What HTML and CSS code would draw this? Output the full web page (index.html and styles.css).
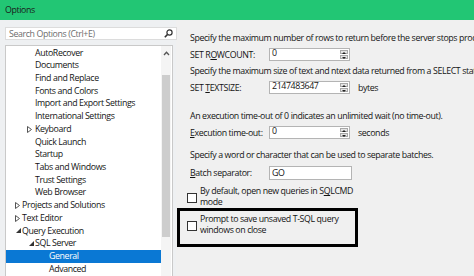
FILE: index.html
```html
<!DOCTYPE html>
<html lang="en">
  <head>
    <meta charset="UTF-8" />
    <title>Options</title>
    <link rel="stylesheet" href="styles.css">
  </head>
  <body>
    <div class="window">
      <header class="titlebar">Options</header>
      <div class="main">
        <aside class="side">
          <div class="search">
            <span class="search-hint">Search Options (Ctrl+E)</span>
            <svg class="search-icon" width="9" height="9" viewBox="0 0 9 9">
              <circle cx="5.5" cy="3.5" r="2.6" fill="none" stroke="#333" stroke-width="1.2" />
              <path d="M3.6 5.4 L0.8 8.2" stroke="#333" stroke-width="1.6" />
            </svg>
          </div>
          <div class="tree">
            <ul class="nodes">
              <li class="node lvl2"><span class="twisty"></span>AutoRecover</li>
              <li class="node lvl2"><span class="twisty"></span>Documents</li>
              <li class="node lvl2"><span class="twisty"></span>Find and Replace</li>
              <li class="node lvl2"><span class="twisty"></span>Fonts and Colors</li>
              <li class="node lvl2"><span class="twisty"></span>Import and Export Settings</li>
              <li class="node lvl2"><span class="twisty"></span>International Settings</li>
              <li class="node lvl2 closed"><span class="twisty"><svg width="5" height="7" viewBox="0 0 5 7"><path d="M0.5 0.5 L4.5 3.5 L0.5 6.5 Z" fill="#fff" stroke="#555" /></svg></span>Keyboard</li>
              <li class="node lvl2"><span class="twisty"></span>Quick Launch</li>
              <li class="node lvl2"><span class="twisty"></span>Startup</li>
              <li class="node lvl2"><span class="twisty"></span>Tabs and Windows</li>
              <li class="node lvl2"><span class="twisty"></span>Trust Settings</li>
              <li class="node lvl2"><span class="twisty"></span>Web Browser</li>
              <li class="node lvl1 closed"><span class="twisty"><svg width="5" height="7" viewBox="0 0 5 7"><path d="M0.5 0.5 L4.5 3.5 L0.5 6.5 Z" fill="#fff" stroke="#555" /></svg></span>Projects and Solutions</li>
              <li class="node lvl1 closed"><span class="twisty"><svg width="5" height="7" viewBox="0 0 5 7"><path d="M0.5 0.5 L4.5 3.5 L0.5 6.5 Z" fill="#fff" stroke="#555" /></svg></span>Text Editor</li>
              <li class="node lvl1 open"><span class="twisty"><svg width="5" height="5" viewBox="0 0 5 5"><path d="M5 0 L5 5 L0 5 Z" fill="#333" /></svg></span>Query Execution</li>
              <li class="node lvl2 open"><span class="twisty"><svg width="5" height="5" viewBox="0 0 5 5"><path d="M5 0 L5 5 L0 5 Z" fill="#333" /></svg></span>SQL Server</li>
              <li class="node lvl3 selected"><span class="twisty"></span>General</li>
              <li class="node lvl3"><span class="twisty"></span>Advanced</li>
            </ul>
            <div class="scrollbar">
              <svg class="scroll-up" width="7" height="5" viewBox="0 0 7 5">
                <path d="M1 4 L3.5 1.3 L6 4" fill="none" stroke="#555" stroke-width="1.3" />
              </svg>
              <div class="thumb"></div>
            </div>
          </div>
        </aside>

        <section class="panel">
          <p class="desc">Specify the maximum number of rows to return before the server stops processing your query.</p>
          <div class="field">
            <label class="label">SET R<u>O</u>WCOUNT:</label>
            <div class="input top"><span class="value">0</span><span class="spin"><i class="up"></i><i class="down"></i></span></div>
          </div>

          <p class="desc gap-s">Specify the maximum size of text and ntext data returned from a SELECT statement.</p>
          <div class="field">
            <label class="label">SET <u>T</u>EXTSIZE:</label>
            <div class="input top"><span class="value">2147483647</span><span class="spin"><i class="up"></i><i class="down"></i></span></div>
            <span class="unit">bytes</span>
          </div>

          <p class="desc gap-l">An execution time-out of 0 indicates an unlimited wait (no time-out).</p>
          <div class="field">
            <label class="label"><u>E</u>xecution time-out:</label>
            <div class="input top"><span class="value">0</span><span class="spin"><i class="up"></i><i class="down"></i></span></div>
            <span class="unit">seconds</span>
          </div>

          <p class="desc gap-m">Specify a word or character that can be used to separate batches.</p>
          <div class="field tall">
            <label class="label"><u>B</u>atch separator:</label>
            <div class="input wide"><span class="value">GO</span></div>
          </div>

          <div class="check first">
            <span class="box"></span>
            <span class="check-text">By default, open new queries in S<u>Q</u>LCMD<br>mode</span>
          </div>

          <div class="marked">
            <div class="check">
              <span class="box"></span>
              <span class="check-text">Prompt to save unsaved T-SQL query<br>windows on close</span>
            </div>
          </div>
        </section>
      </div>
    </div>
  </body>
</html>
```

FILE: styles.css
```css
* {
  margin: 0;
  padding: 0;
  box-sizing: border-box;
}

body {
  width: 474px;
  height: 276px;
  overflow: hidden;
  background: #f0f0f0;
  font-family: "Open Sans", "Noto Sans", sans-serif;
  font-size: 8.8px;
  letter-spacing: -0.38px;
  color: #141414;
}

.window {
  height: 276px;
  display: flex;
  flex-direction: column;
}

.titlebar {
  height: 20px;
  line-height: 20px;
  padding-left: 5px;
  background: #22c674;
  color: #1a1a1a;
}

.main {
  flex: 1;
  display: flex;
  min-height: 0;
}

/* left column */

.side {
  width: 176px;
  padding: 7px 0 0 5px;
  background: #eef0f2;
  display: flex;
  flex-direction: column;
  gap: 5px;
}

.search {
  height: 13px;
  margin-right: -1px;
  background: #fff;
  border: 1px solid #dcdcdc;
  display: flex;
  align-items: center;
  justify-content: space-between;
  padding: 0 3px 0 3px;
}

.search-hint {
  color: #6d6d6d;
}

.tree {
  flex: 1;
  width: 168px;
  background: #fff;
  border: 1px solid #c9c9c9;
  border-bottom: none;
  display: flex;
  overflow: hidden;
}

.nodes {
  list-style: none;
  flex: 1;
  padding-top: 0.5px;
}

.node {
  height: 12.73px;
  line-height: 12.73px;
  display: flex;
  align-items: center;
  white-space: nowrap;
}

.twisty {
  width: 10px;
  height: 100%;
  display: flex;
  align-items: center;
  justify-content: center;
}

.node.open .twisty {
  justify-content: flex-end;
  padding-right: 1px;
}

.node.lvl2.closed .twisty {
  justify-content: flex-start;
  padding-left: 2px;
}

.lvl1 {
  padding-left: 6px;
}

.lvl2 {
  padding-left: 19px;
}

.lvl3 {
  padding-left: 33px;
}

.selected {
  background: #0a78d4;
  color: #fff;
}

.scrollbar {
  width: 10px;
  margin-right: 1px;
  background: #f4f4f4;
  display: flex;
  flex-direction: column;
  align-items: center;
}

.scroll-up {
  margin-top: 5px;
}

.thumb {
  width: 8px;
  height: 162px;
  margin-top: 19px;
  background: #cdcdcd;
}

/* right panel */

.panel {
  flex: 1;
  padding: 12px 0 0 14px;
  white-space: nowrap;
  overflow: hidden;
}

.desc {
  height: 13px;
  line-height: 13px;
}

.gap-s {
  margin-top: 4px;
}

.gap-m {
  margin-top: 10px;
}

.gap-l {
  margin-top: 16px;
}

.field {
  display: flex;
  align-items: center;
  height: 13px;
  margin-top: 2px;
}

.desc + .field {
  margin-top: 3px;
}

.field.tall {
  height: 14px;
  margin-top: 4px;
}

.label {
  width: 79px;
}

.input {
  width: 81px;
  height: 100%;
  background: #fff;
  border: 1px solid #b4b4b4;
  display: flex;
  padding-left: 2px;
}

.input.top .value {
  line-height: 8px;
}

.input.wide {
  width: 83px;
  align-items: center;
}

.value {
  flex: 1;
}

.spin {
  width: 8px;
  margin: 1px 1px 1px 0;
  display: flex;
  flex-direction: column;
  gap: 1px;
}

.spin i {
  flex: 1;
  background: #e4e4e4;
  border: 1px solid #a8a8a8;
  position: relative;
}

.spin i::after {
  content: "";
  position: absolute;
  left: 1px;
  top: 0.5px;
  border-left: 2px solid transparent;
  border-right: 2px solid transparent;
}

.spin .up::after {
  border-bottom: 2px solid #222;
}

.spin .down::after {
  border-top: 2px solid #222;
}

.unit {
  margin-left: 8px;
}

.check {
  display: flex;
  align-items: flex-start;
  line-height: 11px;
}

.check.first {
  margin: 6px 0 0 -3px;
}

.box {
  width: 10px;
  height: 10px;
  margin-top: 7px;
  margin-right: 3px;
  background: #fff;
  border: 1px solid #333;
}

.marked {
  width: 181px;
  margin: 0 0 0 -13px;
  border: 3px solid #000;
  padding: 3px 0 8px 7px;
}
```
